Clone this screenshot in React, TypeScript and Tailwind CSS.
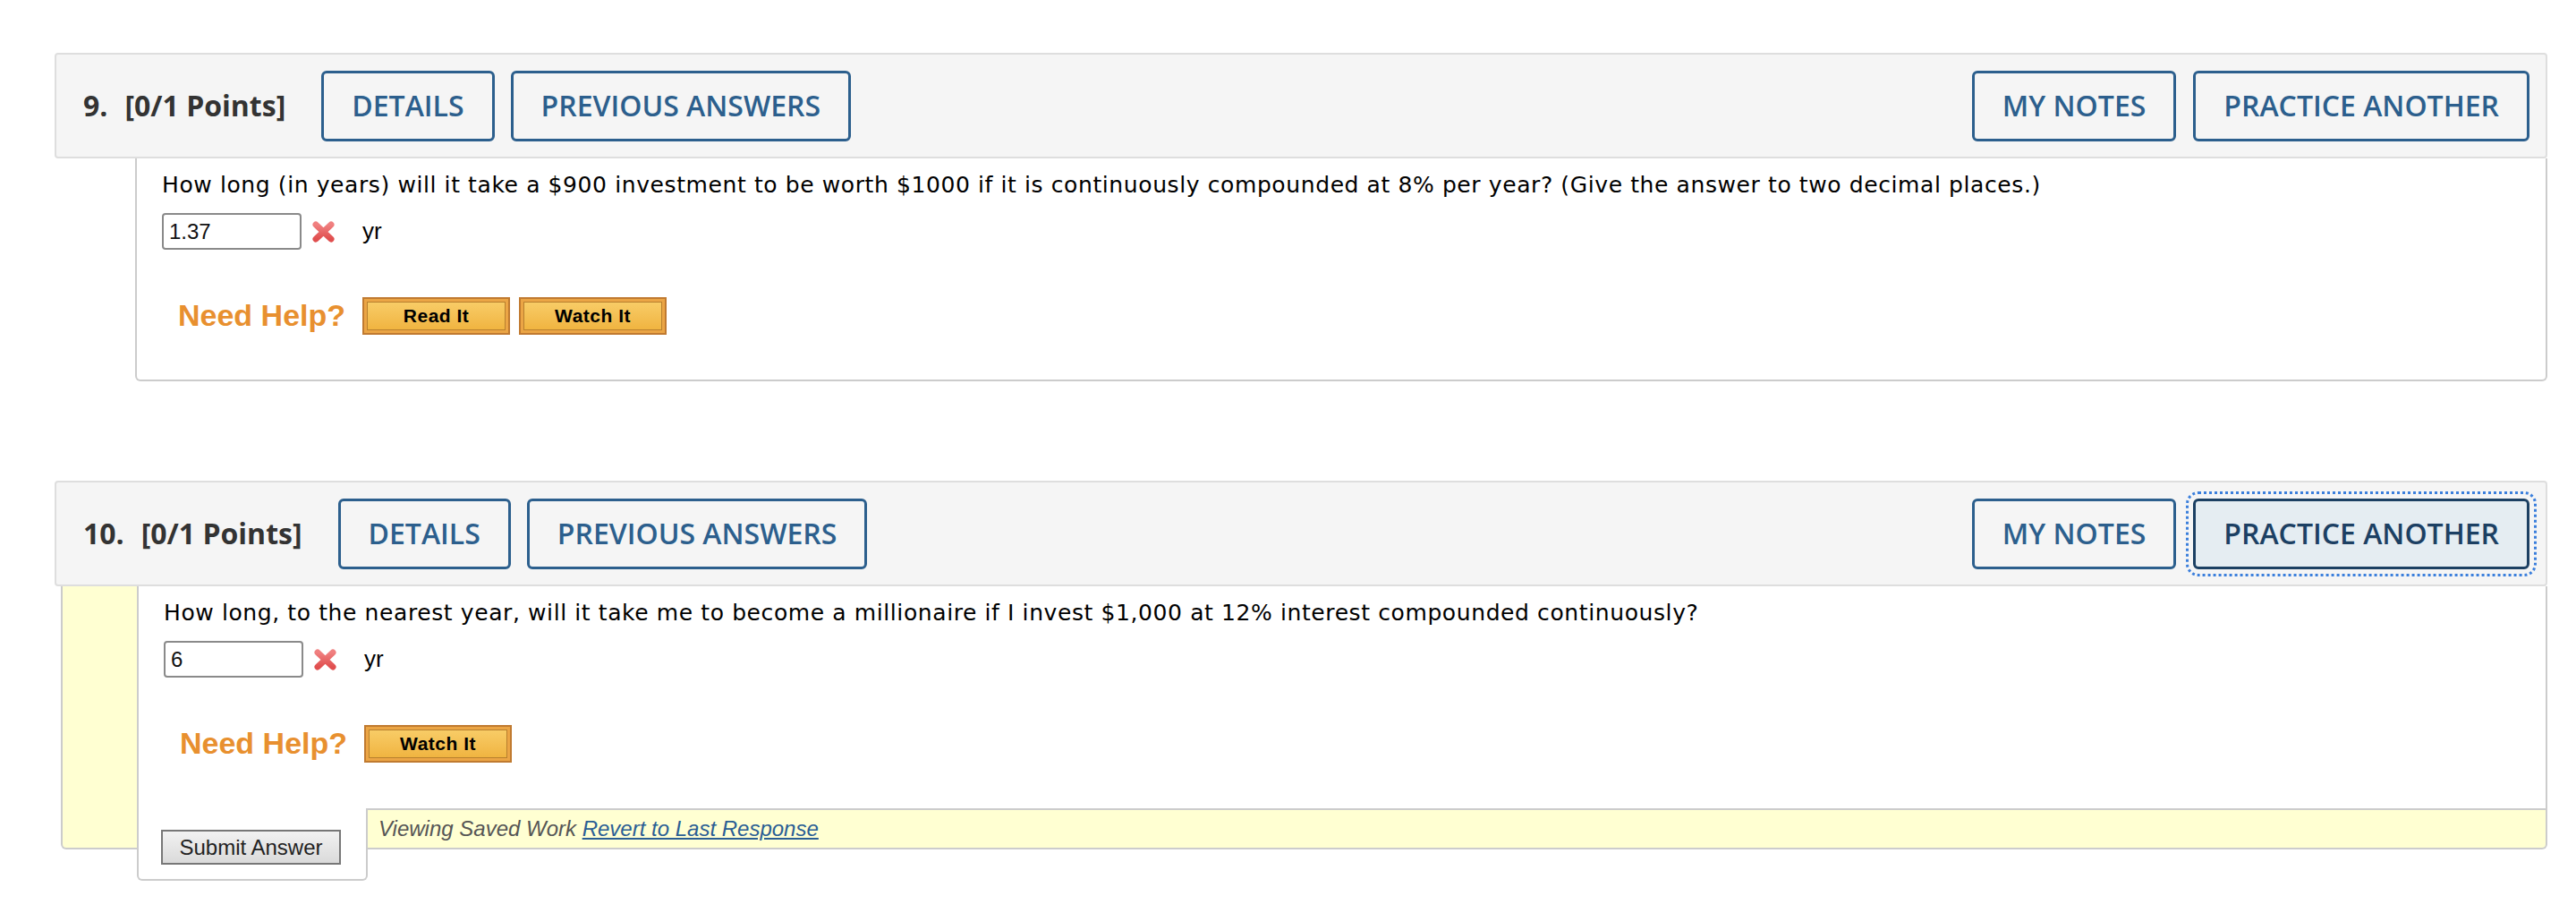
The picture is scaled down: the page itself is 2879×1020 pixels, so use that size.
import React from 'react';

const HeadButton = ({ label, focused }: { label: string; focused?: boolean }) => (
  <button
    className={
      focused
        ? 'h-[79px] rounded-[6px] border-[3px] border-[#1c4063] bg-[#e5edf2] px-[31px] text-[32px] font-semibold leading-none text-[#1c4063] outline-[3px] outline-dotted outline-[#3b7fdc] outline-offset-[5px]'
        : 'h-[79px] rounded-[6px] border-[3px] border-[#2c5f8d] bg-transparent px-[31px] text-[32px] font-semibold leading-none text-[#2c5f8d]'
    }
  >
    {label}
  </button>
);

const Header = ({ num, focused }: { num: number; focused?: boolean }) => (
  <div className="flex h-[118px] items-center rounded-[4px] border-2 border-[#dedede] bg-[#f5f5f5] pl-[30px] pr-[18px] font-['Open_Sans',sans-serif]">
    <div className="text-[32px] font-bold text-[#333]">
      <span>{num}.</span>
      <span className="ml-[19px]">[0/1 Points]</span>
    </div>
    <div className="ml-[40px] flex gap-[18px]">
      <HeadButton label="DETAILS" />
      <HeadButton label="PREVIOUS ANSWERS" />
    </div>
    <div className="ml-auto flex gap-[19px]">
      <HeadButton label="MY NOTES" />
      <HeadButton label="PRACTICE ANOTHER" focused={focused} />
    </div>
  </div>
);

const WrongMark = () => (
  <svg width="27" height="26" viewBox="0 0 27 26" className="ml-[11px]">
    <defs>
      <linearGradient id="xg" x1="0" y1="0" x2="0" y2="1">
        <stop offset="0" stopColor="#f08080" />
        <stop offset="1" stopColor="#e04e4e" />
      </linearGradient>
    </defs>
    <path d="M5 5 L22 21 M22 5 L5 21" stroke="url(#xg)" strokeWidth="7" strokeLinecap="round" />
  </svg>
);

const HelpButton = ({ label }: { label: string }) => (
  <div className="flex h-[42px] w-[165px] items-center justify-center border-2 border-[#c07a30] bg-[#eba545] p-[3px]">
    <div className="flex h-full w-full items-center justify-center border border-[#b8802e] bg-gradient-to-b from-[#f8cc66] to-[#f0b440] font-['Liberation_Sans',Arial,sans-serif] text-[21px] font-bold tracking-[0.5px] text-black">
      {label}
    </div>
  </div>
);

const AnswerRows = ({ text, value, buttons }: { text: string; value: string; buttons: string[] }) => (
  <>
    <p className="font-['DejaVu_Sans',Verdana,sans-serif] text-[25px] leading-[28px] tracking-[0.6px] text-black">{text}</p>
    <div className="mt-[17px] flex items-center">
      <input
        readOnly
        value={value}
        className="h-[41px] w-[156px] rounded-[4px] border-2 border-[#8a8a8a] bg-white pl-[6px] font-['Liberation_Sans',Arial,sans-serif] text-[24px] text-[#111]"
      />
      <WrongMark />
      <span className="ml-[30px] font-['Liberation_Sans',Arial,sans-serif] text-[26px] text-black">yr</span>
    </div>
    <div className="mt-[48px] flex items-center pl-[18px]">
      <span className="font-['Liberation_Sans',Arial,sans-serif] text-[34px] font-bold text-[#e8902f]">Need Help?</span>
      <div className="ml-[19px] flex gap-[10px]">
        {buttons.map((b) => (
          <HelpButton key={b} label={b} />
        ))}
      </div>
    </div>
  </>
);

export default function App() {
  return (
    <div className="min-h-[1020px] bg-white pl-[61px] pr-[32px] pt-[59px]">
      <Header num={9} />
      <div className="ml-[90px] rounded-b-[6px] border-x-2 border-b-2 border-[#cccccc] bg-white pb-[46px] pl-[28px] pt-[16px]">
        <AnswerRows
          text="How long (in years) will it take a $900 investment to be worth $1000 if it is continuously compounded at 8% per year? (Give the answer to two decimal places.)"
          value="1.37"
          buttons={['Read It', 'Watch It']}
        />
      </div>

      <div className="mt-[111px]">
        <Header num={10} focused />
        <div className="ml-[7px] flex rounded-b-[6px] border-x-2 border-b-2 border-[#cccccc] bg-[#ffffd2]">
          <div className="w-[83px] shrink-0" />
          <div className="flex flex-1 flex-col">
            <div className="border-l-2 border-[#cccccc] bg-white pb-[47px] pl-[28px] pt-[16px]">
              <AnswerRows
                text="How long, to the nearest year, will it take me to become a millionaire if I invest $1,000 at 12% interest compounded continuously?"
                value="6"
                buttons={['Watch It']}
              />
            </div>
            <div className="flex items-start">
              <div className="relative z-10 -mb-[37px] h-[81px] w-[258px] shrink-0 rounded-b-[6px] border-x-2 border-b-2 border-[#cccccc] bg-white pl-[25px] pt-[24px]">
                <button className="h-[39px] w-[201px] border-2 border-[#777] bg-gradient-to-b from-[#f2f2f2] to-[#dadada] font-['Liberation_Sans',Arial,sans-serif] text-[24px] leading-none text-[#222]">
                  Submit Answer
                </button>
              </div>
              <div className="flex h-[44px] flex-1 items-center border-t-2 border-[#cccccc] pl-[12px] font-['Liberation_Sans',Arial,sans-serif] text-[24px] italic text-[#555]">
                Viewing Saved Work&nbsp;
                <a href="#" className="text-[#2a5e94] underline">
                  Revert to Last Response
                </a>
              </div>
            </div>
          </div>
        </div>
      </div>
    </div>
  );
}
